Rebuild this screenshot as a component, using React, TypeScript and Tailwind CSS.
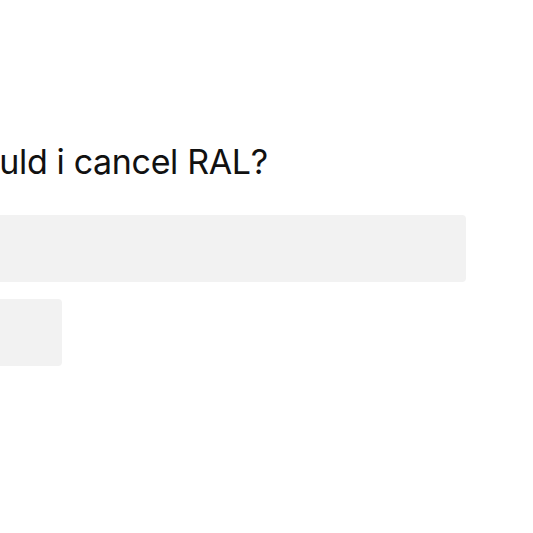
export default function App() {
  return (
    <div className="w-[533px] h-[533px] bg-white overflow-hidden" style={{ fontFamily: "Inter, 'Noto Sans', sans-serif" }}>
      <div className="ml-[-62px] pt-[142px] flex flex-col items-start">
        <h1 className="text-[34px] leading-[40px] font-normal text-[#111111] whitespace-nowrap tracking-[-0.35px]">Should i cancel RAL?</h1>
        <div className="mt-[33px] w-[528px] h-[67px] rounded-[4px] bg-[#f2f2f2]"></div>
        <div className="mt-[17px] w-[124px] h-[67px] rounded-[4px] bg-[#f2f2f2]"></div>
      </div>
    </div>
  );
}
